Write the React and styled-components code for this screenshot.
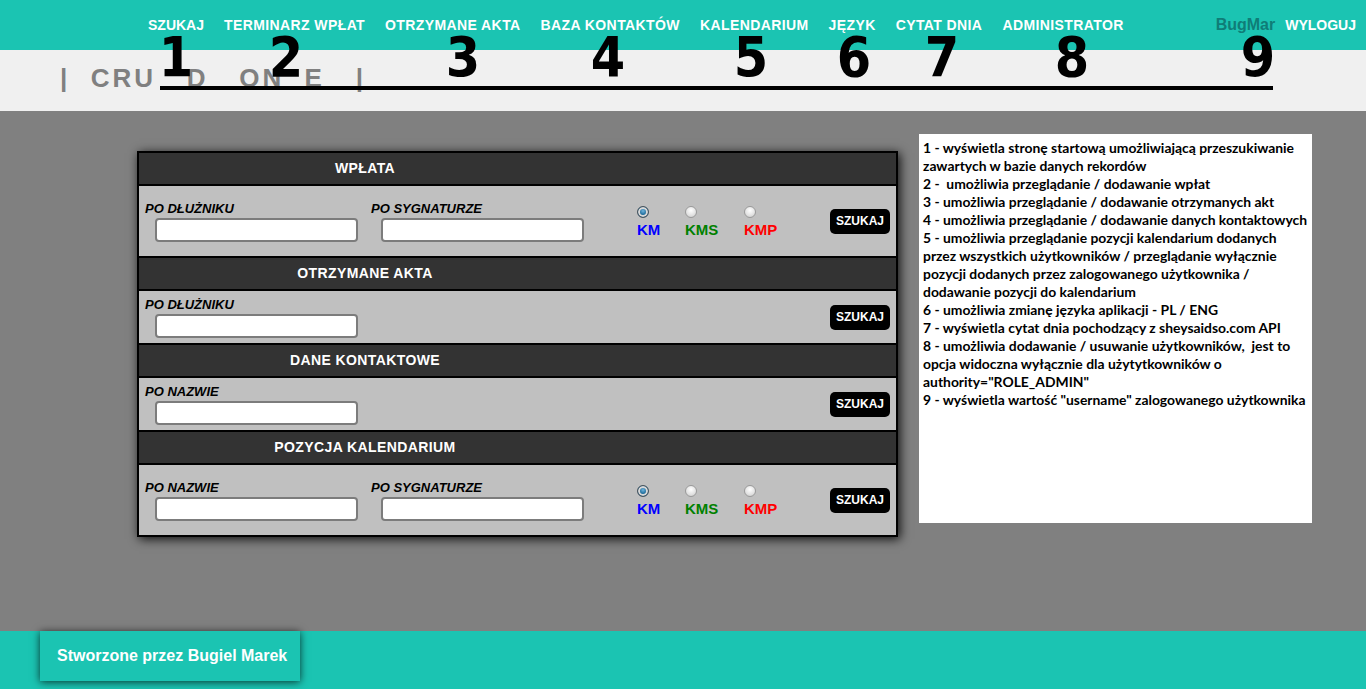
import React from "react";
import styled, { createGlobalStyle } from "styled-components";

const TEAL = "#1bc4b2";

const GlobalStyle = createGlobalStyle`
  html, body { margin: 0; padding: 0; }
  body {
    font-family: "Liberation Sans", Arial, sans-serif;
    background: #808080;
  }
  * { box-sizing: border-box; }
`;

const Page = styled.div`
  display: flex;
  flex-direction: column;
  height: 689px;
  overflow: hidden;
`;

const Header = styled.header`
  position: relative;
  display: flex;
  flex-direction: column;
`;

const NavBar = styled.nav`
  height: 50px;
  background: ${TEAL};
  display: flex;
  align-items: center;
  padding: 0 10px 0 148px;
`;

const NavList = styled.div`
  display: flex;
  gap: 20px;
`;

const NavLink = styled.a`
  color: #fff;
  font-size: 14px;
  font-weight: bold;
  letter-spacing: ${(p) => (p.$tight ? 0 : 0.4)}px;
  text-decoration: none;
  white-space: nowrap;
`;

const Spacer = styled.div`
  flex: 1;
`;

const UserBox = styled.div`
  display: flex;
  align-items: center;
  gap: 10px;
`;

const UserName = styled.span`
  color: #0f7d77;
  font-size: 16px;
  font-weight: bold;
`;

const BrandBand = styled.div`
  height: 61px;
  background: #f0f0f0;
  padding: 15px 0 0 60px;
`;

const Brand = styled.div`
  font-size: 26px;
  line-height: 26px;
  font-weight: bold;
  color: #808080;
  letter-spacing: 3px;
  white-space: pre;
`;

const Annotation = styled.span`
  position: absolute;
  top: 30px;
  transform: translateX(-50%);
  font-family: "DejaVu Sans Condensed", "DejaVu Sans", sans-serif;
  font-stretch: condensed;
  font-weight: bold;
  font-size: 55px;
  line-height: 55px;
  color: #000;
`;

const AnnotationLine = styled.div`
  position: absolute;
  left: 160px;
  top: 86px;
  width: 1113px;
  height: 4px;
  background: #000;
`;

const Main = styled.main`
  flex: 1;
  background: #808080;
  display: flex;
  align-items: flex-start;
  padding-left: 137px;
`;

const FormPanel = styled.div`
  margin-top: 40px;
  width: 761px;
  border: 2px solid #000;
  background: #000;
  display: flex;
  flex-direction: column;
  gap: 2px;
  box-shadow: 2px 2px 10px rgba(0, 0, 0, 0.9);
`;

const SectionHeader = styled.div`
  height: 31px;
  background: #333;
  display: flex;
`;

const SectionTitle = styled.div`
  width: 452px;
  text-align: center;
  line-height: 31px;
  color: #fff;
  font-size: 14px;
  font-weight: bold;
  letter-spacing: 0.4px;
`;

const SectionBody = styled.div`
  height: ${(p) => p.$h}px;
  background: #c0c0c0;
  display: grid;
  grid-template-columns: 226px 226px 230px 1fr;
  align-items: center;
`;

const Field = styled.div`
  padding-left: 6px;
  display: flex;
  flex-direction: column;
  align-items: flex-start;
`;

const FieldLabel = styled.label`
  font-size: 13px;
  line-height: 15px;
  font-weight: bold;
  font-style: italic;
  color: #000;
`;

const TextInput = styled.input`
  margin: 2px 0 0 10px;
  width: 203px;
  height: 24px;
  border: 2px solid #7c7c7c;
  border-radius: 4px;
  background: #fff;
  outline: none;
`;

const RadioGroup = styled.div`
  padding-left: 46px;
  display: grid;
  grid-template-columns: 48px 59px auto;
  padding-top: 2px;
`;

const RadioOption = styled.label`
  display: flex;
  flex-direction: column;
  align-items: flex-start;
  gap: 3px;
`;

const Radio = styled.input.attrs({ type: "radio" })`
  appearance: none;
  margin: 0;
  width: 12px;
  height: 12px;
  border-radius: 50%;
  border: 1px solid #9a9a9a;
  background: radial-gradient(circle at 50% 35%, #ffffff 0%, #e4e4e4 55%, #c8c8c8 100%);
  &:checked {
    border-color: #44525c;
    background: radial-gradient(circle at 50% 40%, #6fb3dc 0%, #1f6d9c 45%, #0d3c5c 100%);
    box-shadow: inset 0 0 0 2px #d8d8d8;
  }
`;

const RadioText = styled.span`
  font-size: 15px;
  line-height: 18px;
  font-weight: bold;
  color: ${(p) => p.$color};
`;

const ButtonCell = styled.div`
  padding-left: 9px;
`;

const SearchButton = styled.button`
  width: 60px;
  height: 25px;
  border: none;
  border-radius: 5px;
  background: #000;
  color: #fff;
  font-family: "Liberation Sans", Arial, sans-serif;
  font-size: 12px;
  font-weight: bold;
  padding: 0;
`;

const InfoBox = styled.div`
  margin: 23px 0 0 21px;
  width: 393px;
  height: 389px;
  background: #fff;
  padding: 5px 4px;
  font-family: Lato, "Open Sans", sans-serif;
  font-weight: bold;
  font-size: 13.9px;
  line-height: 18px;
  color: #000;
`;

const InfoLine = styled.div`
  white-space: pre;
`;

const Footer = styled.footer`
  height: 58px;
  background: ${TEAL};
  padding-left: 40px;
`;

const FooterCard = styled.div`
  width: 260px;
  height: 50px;
  background: ${TEAL};
  box-shadow: 0 1px 8px rgba(0, 0, 0, 0.75);
  display: flex;
  align-items: center;
  padding-left: 17px;
  color: #fff;
  font-size: 16px;
  font-weight: bold;
`;

const navItems = [
  "SZUKAJ",
  "TERMINARZ WPŁAT",
  "OTRZYMANE AKTA",
  "BAZA KONTAKTÓW",
  "KALENDARIUM",
  "JĘZYK",
  "CYTAT DNIA",
  "ADMINISTRATOR",
];

const annotations = [
  ["1", 176],
  ["2", 286],
  ["3", 463],
  ["4", 608],
  ["5", 751],
  ["6", 854],
  ["7", 942],
  ["8", 1072],
  ["9", 1258],
];

const infoLines = [
  "1 - wyświetla stronę startową umożliwiającą przeszukiwanie",
  "zawartych w bazie danych rekordów",
  "2 -  umożliwia przeglądanie / dodawanie wpłat",
  "3 - umożliwia przeglądanie / dodawanie otrzymanych akt",
  "4 - umożliwia przeglądanie / dodawanie danych kontaktowych",
  "5 - umożliwia przeglądanie pozycji kalendarium dodanych",
  "przez wszystkich użytkowników / przeglądanie wyłącznie",
  "pozycji dodanych przez zalogowanego użytkownika /",
  "dodawanie pozycji do kalendarium",
  "6 - umożliwia zmianę języka aplikacji - PL / ENG",
  "7 - wyświetla cytat dnia pochodzący z sheysaidso.com API",
  "8 - umożliwia dodawanie / usuwanie użytkowników,  jest to",
  "opcja widoczna wyłącznie dla użytytkowników o",
  'authority="ROLE_ADMIN"',
  '9 - wyświetla wartość "username" zalogowanego użytkownika',
];

function Radios({ name }) {
  return (
    <RadioGroup>
      <RadioOption>
        <Radio name={name} defaultChecked />
        <RadioText $color="#0000ff">KM</RadioText>
      </RadioOption>
      <RadioOption>
        <Radio name={name} />
        <RadioText $color="#008000">KMS</RadioText>
      </RadioOption>
      <RadioOption>
        <Radio name={name} />
        <RadioText $color="#ff0000">KMP</RadioText>
      </RadioOption>
    </RadioGroup>
  );
}

function Section({ title, h, fields, radios }) {
  return (
    <>
      <SectionHeader>
        <SectionTitle>{title}</SectionTitle>
      </SectionHeader>
      <SectionBody $h={h}>
        <Field>
          <FieldLabel>{fields[0]}</FieldLabel>
          <TextInput />
        </Field>
        {fields[1] ? (
          <Field>
            <FieldLabel>{fields[1]}</FieldLabel>
            <TextInput />
          </Field>
        ) : (
          <div />
        )}
        {radios ? <Radios name={radios} /> : <div />}
        <ButtonCell>
          <SearchButton>SZUKAJ</SearchButton>
        </ButtonCell>
      </SectionBody>
    </>
  );
}

export default function App() {
  return (
    <Page>
      <GlobalStyle />
      <Header>
        <NavBar>
          <NavList>
            {navItems.map((n) => (
              <NavLink key={n} href="#" $tight={n === "SZUKAJ"}>
                {n}
              </NavLink>
            ))}
          </NavList>
          <Spacer />
          <UserBox>
            <UserName>BugMar</UserName>
            <NavLink href="#" $tight>
              WYLOGUJ
            </NavLink>
          </UserBox>
        </NavBar>
        <BrandBand>
          <Brand>{"|  CRU   D   ON  E   |"}</Brand>
        </BrandBand>
        {annotations.map(([n, x]) => (
          <Annotation key={n} style={{ left: x }}>
            {n}
          </Annotation>
        ))}
        <AnnotationLine />
      </Header>
      <Main>
        <FormPanel>
          <Section title="WPŁATA" h={70} fields={["PO DŁUŻNIKU", "PO SYGNATURZE"]} radios="r1" />
          <Section title="OTRZYMANE AKTA" h={52} fields={["PO DŁUŻNIKU"]} />
          <Section title="DANE KONTAKTOWE" h={52} fields={["PO NAZWIE"]} />
          <Section title="POZYCJA KALENDARIUM" h={70} fields={["PO NAZWIE", "PO SYGNATURZE"]} radios="r2" />
        </FormPanel>
        <InfoBox>
          {infoLines.map((l, i) => (
            <InfoLine key={i}>{l}</InfoLine>
          ))}
        </InfoBox>
      </Main>
      <Footer>
        <FooterCard>Stworzone przez Bugiel Marek</FooterCard>
      </Footer>
    </Page>
  );
}
